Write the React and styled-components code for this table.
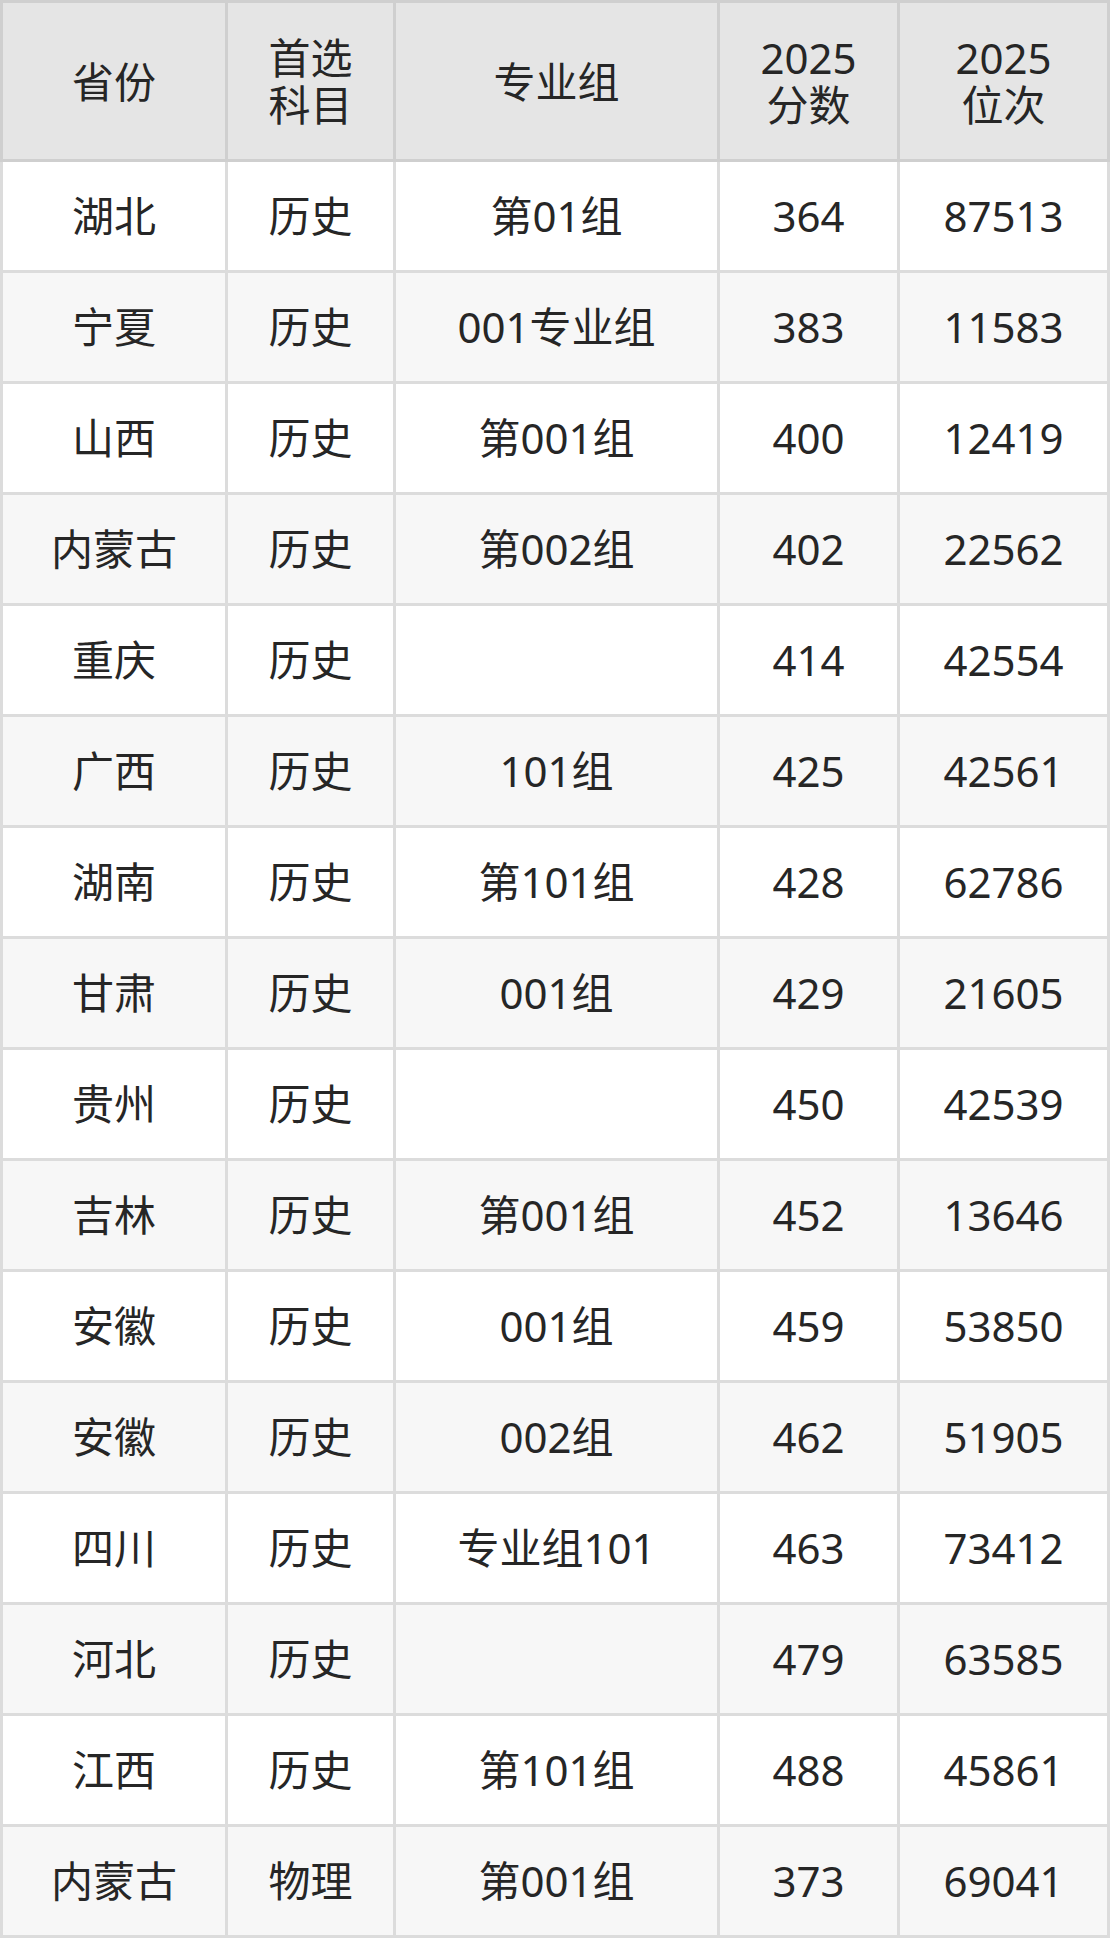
import React from 'react';
import styled, { createGlobalStyle } from 'styled-components';

const rows = [
  ['湖北', '历史', '第01组', '364', '87513'],
  ['宁夏', '历史', '001专业组', '383', '11583'],
  ['山西', '历史', '第001组', '400', '12419'],
  ['内蒙古', '历史', '第002组', '402', '22562'],
  ['重庆', '历史', '', '414', '42554'],
  ['广西', '历史', '101组', '425', '42561'],
  ['湖南', '历史', '第101组', '428', '62786'],
  ['甘肃', '历史', '001组', '429', '21605'],
  ['贵州', '历史', '', '450', '42539'],
  ['吉林', '历史', '第001组', '452', '13646'],
  ['安徽', '历史', '001组', '459', '53850'],
  ['安徽', '历史', '002组', '462', '51905'],
  ['四川', '历史', '专业组101', '463', '73412'],
  ['河北', '历史', '', '479', '63585'],
  ['江西', '历史', '第101组', '488', '45861'],
  ['内蒙古', '物理', '第001组', '373', '69041'],
];

const widths = [225, 168, 324, 180, 210];

function App() {
  return (
    <>
      <GlobalStyle />
      <Table>
        <colgroup>
          {widths.map((w, i) => (
            <col key={i} style={{ width: w }} />
          ))}
        </colgroup>
        <thead>
          <tr>
            <Th>省份</Th>
            <Th>首选<br />科目</Th>
            <Th>专业组</Th>
            <Th>2025<br />分数</Th>
            <Th>2025<br />位次</Th>
          </tr>
        </thead>
        <tbody>
          {rows.map((r, i) => (
            <Row key={i} $odd={i % 2 === 1}>
              {r.map((c, j) => (
                <Td key={j}>{c}</Td>
              ))}
            </Row>
          ))}
        </tbody>
      </Table>
    </>
  );
}

export default App;

const GlobalStyle = createGlobalStyle`
  body {
    margin: 0;
    background: #fff;
    font-family: "Noto Sans", "Noto Sans CJK SC", sans-serif;
    color: #262626;
  }
`;

const Table = styled.table`
  width: 1110px;
  table-layout: fixed;
  border-collapse: collapse;
  font-size: 42px;
`;

const Th = styled.th`
  height: 156px;
  padding: 0;
  background: #e5e5e5;
  border: 3px solid #cfcfcf;
  font-weight: 400;
  line-height: 47px;
  text-align: center;
  vertical-align: middle;
`;

const Row = styled.tr`
  background: ${p => (p.$odd ? '#f7f7f7' : '#fff')};
`;

const Td = styled.td`
  height: 108px;
  padding: 0;
  border: 3px solid #dcdcdc;
  text-align: center;
  vertical-align: middle;
  line-height: 1.2;
`;
